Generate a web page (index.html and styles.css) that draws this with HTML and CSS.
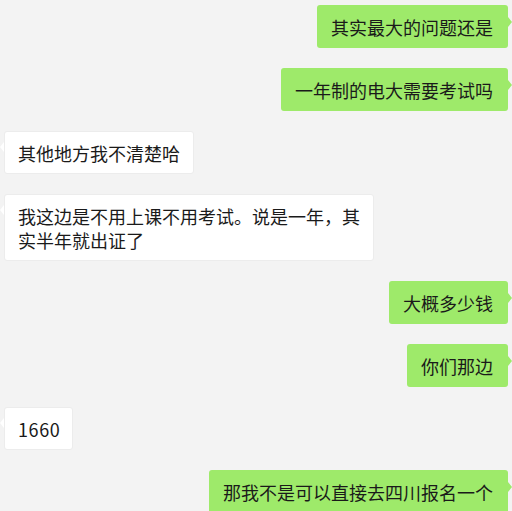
FILE: index.html
```html
<!DOCTYPE html>
<html lang="zh-CN">
<head>
<meta charset="utf-8">
<title>聊天</title>
<link rel="stylesheet" href="styles.css">
</head>
<body>
<div class="chat">
  <div class="row me"><div class="bubble">其实最大的问题还是</div></div>
  <div class="row me"><div class="bubble">一年制的电大需要考试吗</div></div>
  <div class="row other"><div class="bubble">其他地方我不清楚哈</div></div>
  <div class="row other"><div class="bubble">我这边是不用上课不用考试。说是一年，其实半年就出证了</div></div>
  <div class="row me"><div class="bubble">大概多少钱</div></div>
  <div class="row me"><div class="bubble">你们那边</div></div>
  <div class="row other"><div class="bubble num">1660</div></div>
  <div class="row me"><div class="bubble">那我不是可以直接去四川报名一个</div></div>
</div>
</body>
</html>
```
FILE: styles.css
```css
html, body {
  margin: 0;
  padding: 0;
  background: #f3f3f3;
  height: 100%;
  overflow: hidden;
}
.chat {
  display: flex;
  flex-direction: column;
  gap: 20px;
  padding: 5px 4px 0 4px;
  font-family: "Noto Sans CJK SC", "Microsoft YaHei", sans-serif;
  font-size: 18px;
  color: #1a1a1a;
}
.row {
  display: flex;
}
.row.me {
  justify-content: flex-end;
}
.row.other {
  justify-content: flex-start;
}
.bubble {
  position: relative;
  box-sizing: border-box;
  max-width: 370px;
  padding: 10px 14px 9px 14px;
  line-height: 24px;
  border-radius: 3px;
  word-break: break-all;
}
.me .bubble {
  background: #9eea6a;
  padding-right: 15px;
}
.other .bubble {
  background: #ffffff;
  border: 1px solid #ececec;
  padding: 9px 13px 8px 13px;
}
.other .bubble.num {
  letter-spacing: 0.6px;
  padding-right: 12px;
}
.bubble::before {
  content: "";
  position: absolute;
  top: 12px;
  width: 0;
  height: 0;
  border-top: 5px solid transparent;
  border-bottom: 5px solid transparent;
}
.me .bubble::before {
  right: -4px;
  border-left: 4px solid #9eea6a;
}
.other .bubble::before {
  left: -5px;
  top: 10px;
  border-right: 4px solid #ffffff;
}
```
